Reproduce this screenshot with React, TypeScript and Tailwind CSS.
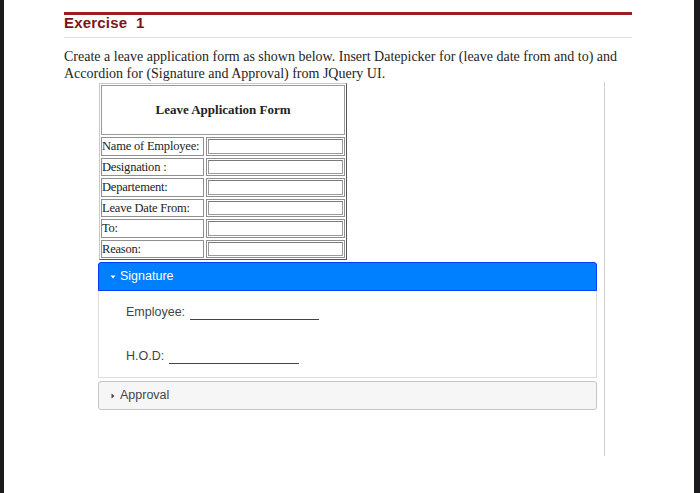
import React from "react";

const rows = ["Name of Employee:", "Designation :", "Departement:", "Leave Date From:", "To:", "Reason:"];

function TriangleDown() {
  return (
    <svg width="8" height="8" viewBox="0 0 8 8" className="shrink-0">
      <path d="M1.5 2.5 L6.5 2.5 L4 5.5 Z" fill="#ffffff" />
    </svg>
  );
}

function TriangleRight() {
  return (
    <svg width="8" height="8" viewBox="0 0 8 8" className="shrink-0">
      <path d="M2.5 1.5 L5.5 4 L2.5 6.5 Z" fill="#454545" />
    </svg>
  );
}

export default function App() {
  return (
    <div className="flex w-[700px] h-[493px] bg-white overflow-hidden">
      <div className="w-[4px] h-full bg-[#1b1b1d]" />
      <div className="flex-1 pl-[60px] pt-[12px]">
        {/* heading */}
        <div className="w-[568px] h-[3px] bg-[#9e1b26]" />
        <div className="h-[16px] font-['Liberation_Sans',Arial,sans-serif] font-bold text-[15px] leading-[16px] text-[#7d1416] tracking-[0.2px]">
          Exercise&nbsp; 1
        </div>
        <div className="mt-[6px] w-[568px] h-px bg-[#e2e2e2]" />
        <p className="mt-[10px] w-[568px] font-['Liberation_Serif','Times_New_Roman',serif] text-[14px] leading-[17px] text-[#1e1e1e]">
          Create a leave application form as shown below. Insert Datepicker for (leave date from and to) and
          <br />
          Accordion for (Signature and Approval) from JQuery UI.
        </p>

        {/* demo box */}
        <div className="ml-[34px] w-[507px] h-[374px] border-r border-[#d0d0d0] pt-[1px]">
          <div className="ml-[1px] w-[248px] flex flex-col gap-[2px] p-px border border-t-[#c8c8c8] border-l-[#c8c8c8] border-r-[#555] border-b-[#555] font-['Liberation_Serif','Times_New_Roman',serif] text-[12.5px] text-[#222]">
            <div className="h-[50px] border border-[#9a9a9a] flex items-center justify-center font-bold text-[13px]">
              Leave Application Form
            </div>
            {rows.map((r) => (
              <div key={r} className="grid grid-cols-[103px_1fr] gap-[2px] h-[18.5px]">
                <div className="border border-[#8f8f8f] leading-[16px] whitespace-nowrap tracking-[-0.2px]">
                  {r}
                </div>
                <div className="border border-[#8f8f8f] p-px">
                  <div className="h-full border border-[#9a9a9a] border-t-[#7a7a7a] bg-white" />
                </div>
              </div>
            ))}
          </div>

          {/* accordion */}
          <div className="mt-[2px] w-[499px] font-['Liberation_Sans',Arial,sans-serif] text-[12.5px]">
            <div className="h-[29px] rounded-t-[3px] bg-[#007fff] border border-[#003eff] flex items-center gap-[3px] pl-[10px] text-white">
              <TriangleDown />
              <span>Signature</span>
            </div>
            <div className="h-[87px] border border-t-0 border-[#dddddd] pl-[27px] text-[#444]">
              <div className="pt-[12px] flex items-end">
                <span>Employee:</span>
                <span className="ml-[5px] mb-[2px] w-[129px] h-px bg-[#444]" />
              </div>
              <div className="mt-[25px] flex items-end">
                <span>H.O.D:</span>
                <span className="ml-[5px] mb-[2px] w-[130px] h-px bg-[#444]" />
              </div>
            </div>
            <div className="mt-[3px] h-[29px] rounded-[3px] bg-[#f6f6f6] border border-[#c5c5c5] flex items-center gap-[3px] pl-[10px] text-[#454545]">
              <TriangleRight />
              <span>Approval</span>
            </div>
          </div>
        </div>
      </div>
      <div className="w-[6px] h-full bg-[#1b1b1d]" />
    </div>
  );
}
